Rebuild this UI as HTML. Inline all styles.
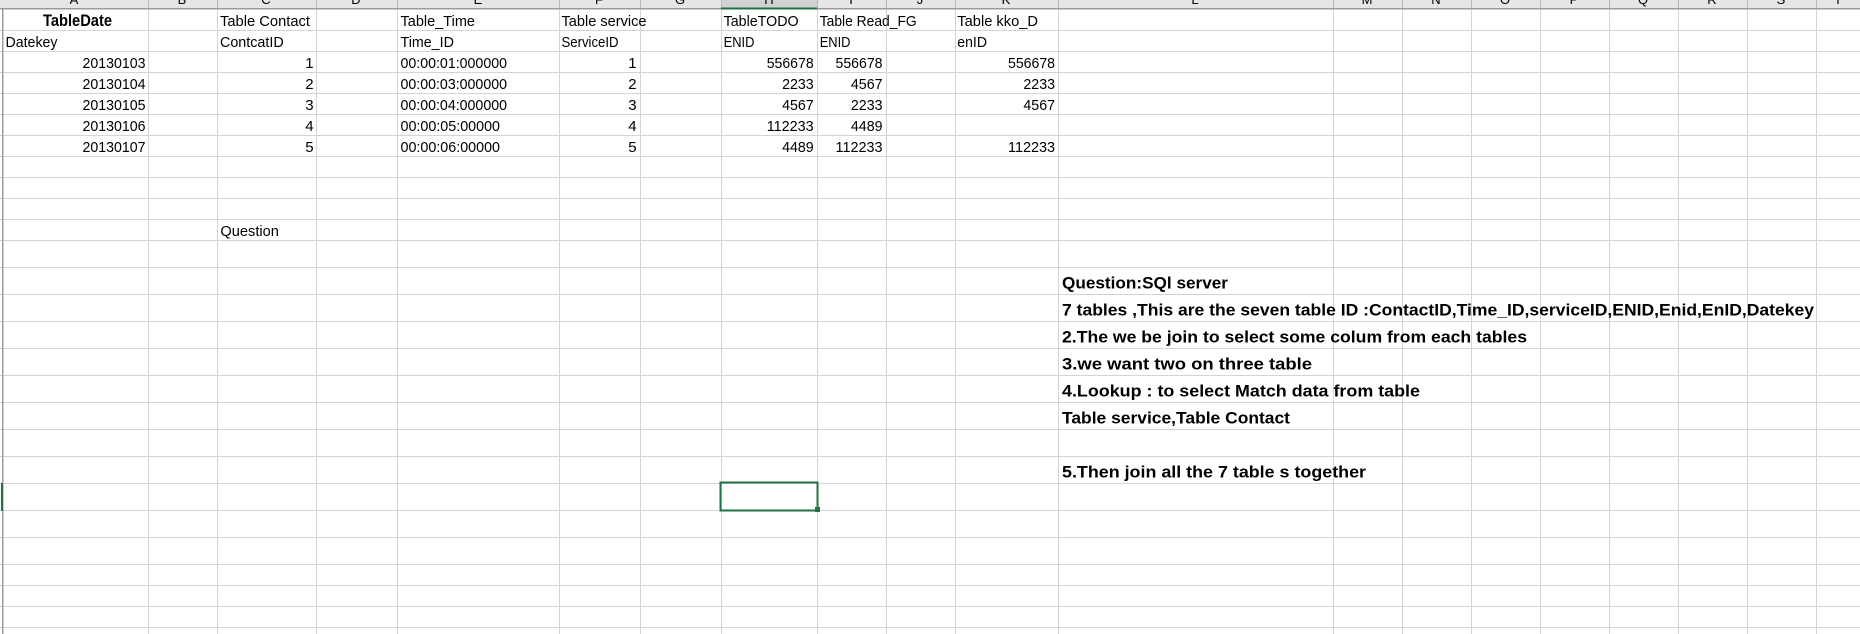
<!DOCTYPE html>
<html><head><meta charset="utf-8"><style>
html,body{margin:0;padding:0;background:#fff;width:1860px;height:634px;overflow:hidden}
svg{display:block}
text{font-family:"Liberation Sans",sans-serif;fill:#000}
.n{font-size:15px}
.b{font-size:16.5px;font-weight:bold}
.h{font-size:13px;fill:#444}
</style></head><body>
<svg width="1860" height="634" viewBox="0 0 1860 634" xmlns="http://www.w3.org/2000/svg" shape-rendering="crispEdges">
<rect x="0" y="0" width="1860" height="9" fill="#e6e6e6"/>
<rect x="721" y="0" width="96" height="9" fill="#d2d2d2"/>
<g class="h" text-anchor="middle">
<text x="74" y="4">A</text><text x="182" y="4">B</text><text x="266" y="4">C</text><text x="356" y="4">D</text>
<text x="478" y="4">E</text><text x="599" y="4">F</text><text x="680" y="4">G</text><text x="769" y="4">H</text>
<text x="851" y="4">I</text><text x="920" y="4">J</text><text x="1006" y="4">K</text><text x="1195" y="4">L</text>
<text x="1367" y="4">M</text><text x="1436" y="4">N</text><text x="1505" y="4">O</text><text x="1574" y="4">P</text>
<text x="1643" y="4">Q</text><text x="1712" y="4">R</text><text x="1781" y="4">S</text><text x="1838" y="4">T</text>
</g>
<g stroke="#b8b8b8" stroke-width="1">
<path d="M148.5 0V9M217.5 0V9M316.5 0V9M397.5 0V9M559.5 0V9M640.5 0V9M721.5 0V9M817.5 0V9M886.5 0V9M955.5 0V9M1058.5 0V9M1333.5 0V9M1402.5 0V9M1471.5 0V9M1540.5 0V9M1609.5 0V9M1678.5 0V9M1747.5 0V9M1816.5 0V9"/>
</g>
<g stroke="#d4d4d4" stroke-width="1">
<path d="M148.5 9V634M217.5 9V634M316.5 9V634M397.5 9V634M559.5 9V634M640.5 9V634M721.5 9V634M817.5 9V634M886.5 9V634M955.5 9V634M1058.5 9V634M1333.5 9V634M1402.5 9V634M1471.5 9V634M1540.5 9V634M1609.5 9V634M1678.5 9V634M1747.5 9V634M1816.5 9V634"/>
<path d="M0 30.5H1860M0 51.5H1860M0 72.5H1860M0 93.5H1860M0 114.5H1860M0 135.5H1860M0 156.5H1860M0 177.5H1860M0 198.5H1860M0 219.5H1860M0 240.5H1860M0 267.5H1860M0 294.5H1860M0 321.5H1860M0 348.5H1860M0 375.5H1860M0 402.5H1860M0 429.5H1860M0 456.5H1860M0 483.5H1860M0 510.5H1860M0 537.5H1860M0 564.5H1860M0 585.5H1860M0 606.5H1860M0 627.5H1860"/>
</g>
<rect x="0" y="8" width="1860" height="1.5" fill="#9b9b9b"/>
<rect x="721" y="7.5" width="96" height="2" fill="#217346"/>
<rect x="2" y="9" width="1.3" height="625" fill="#9b9b9b"/>
<rect x="1" y="483" width="2" height="28" fill="#217346"/>
<rect x="720.5" y="482.5" width="97" height="28" fill="none" stroke="#217346" stroke-width="2"/>
<rect x="815" y="507" width="5" height="5" fill="#217346"/>

<text class="b" x="43" y="26" textLength="69" lengthAdjust="spacingAndGlyphs">TableDate</text>
<g class="n">
<text x="5.5" y="47" textLength="52" lengthAdjust="spacingAndGlyphs">Datekey</text>
<g text-anchor="end">
<text x="145.5" y="68" textLength="63" lengthAdjust="spacingAndGlyphs">20130103</text>
<text x="145.5" y="89" textLength="63" lengthAdjust="spacingAndGlyphs">20130104</text>
<text x="145.5" y="110" textLength="63" lengthAdjust="spacingAndGlyphs">20130105</text>
<text x="145.5" y="131" textLength="63" lengthAdjust="spacingAndGlyphs">20130106</text>
<text x="145.5" y="152" textLength="63" lengthAdjust="spacingAndGlyphs">20130107</text>
<text x="313.6" y="68">1</text><text x="313.6" y="89">2</text><text x="313.6" y="110">3</text><text x="313.6" y="131">4</text><text x="313.6" y="152">5</text>
<text x="636.6" y="68">1</text><text x="636.6" y="89">2</text><text x="636.6" y="110">3</text><text x="636.6" y="131">4</text><text x="636.6" y="152">5</text>
<text x="813.7" y="68" textLength="47" lengthAdjust="spacingAndGlyphs">556678</text>
<text x="813.7" y="89" textLength="31.6" lengthAdjust="spacingAndGlyphs">2233</text>
<text x="813.7" y="110" textLength="31.6" lengthAdjust="spacingAndGlyphs">4567</text>
<text x="813.7" y="131" textLength="47" lengthAdjust="spacingAndGlyphs">112233</text>
<text x="813.7" y="152" textLength="31.6" lengthAdjust="spacingAndGlyphs">4489</text>
<text x="882.5" y="68" textLength="47" lengthAdjust="spacingAndGlyphs">556678</text>
<text x="882.5" y="89" textLength="31.6" lengthAdjust="spacingAndGlyphs">4567</text>
<text x="882.5" y="110" textLength="31.6" lengthAdjust="spacingAndGlyphs">2233</text>
<text x="882.5" y="131" textLength="31.6" lengthAdjust="spacingAndGlyphs">4489</text>
<text x="882.5" y="152" textLength="47" lengthAdjust="spacingAndGlyphs">112233</text>
<text x="1055" y="68" textLength="47" lengthAdjust="spacingAndGlyphs">556678</text>
<text x="1055" y="89" textLength="31.6" lengthAdjust="spacingAndGlyphs">2233</text>
<text x="1055" y="110" textLength="31.6" lengthAdjust="spacingAndGlyphs">4567</text>
<text x="1055" y="152" textLength="47" lengthAdjust="spacingAndGlyphs">112233</text>
</g>
<text x="220" y="26" textLength="90" lengthAdjust="spacingAndGlyphs">Table Contact</text>
<text x="220" y="47" textLength="63.7" lengthAdjust="spacingAndGlyphs">ContcatID</text>
<text x="400.5" y="26" textLength="74.5" lengthAdjust="spacingAndGlyphs">Table_Time</text>
<text x="400.5" y="47" textLength="53.4" lengthAdjust="spacingAndGlyphs">Time_ID</text>
<text x="400.5" y="68" textLength="106.5" lengthAdjust="spacingAndGlyphs">00:00:01:000000</text>
<text x="400.5" y="89" textLength="106.5" lengthAdjust="spacingAndGlyphs">00:00:03:000000</text>
<text x="400.5" y="110" textLength="106.5" lengthAdjust="spacingAndGlyphs">00:00:04:000000</text>
<text x="400.5" y="131" textLength="99.5" lengthAdjust="spacingAndGlyphs">00:00:05:00000</text>
<text x="400.5" y="152" textLength="99.5" lengthAdjust="spacingAndGlyphs">00:00:06:00000</text>
<text x="561.5" y="26" textLength="85" lengthAdjust="spacingAndGlyphs">Table service</text>
<text x="561.5" y="47" textLength="57" lengthAdjust="spacingAndGlyphs">ServiceID</text>
<text x="723.6" y="26" textLength="75" lengthAdjust="spacingAndGlyphs">TableTODO</text>
<text x="723.6" y="47" textLength="30.8" lengthAdjust="spacingAndGlyphs">ENID</text>
<text x="819.7" y="26" textLength="97" lengthAdjust="spacingAndGlyphs">Table Read_FG</text>
<text x="819.7" y="47" textLength="30.8" lengthAdjust="spacingAndGlyphs">ENID</text>
<text x="957.3" y="26" textLength="80.7" lengthAdjust="spacingAndGlyphs">Table kko_D</text>
<text x="957.3" y="47" textLength="29.7" lengthAdjust="spacingAndGlyphs">enID</text>
<text x="220.4" y="236" textLength="58.5" lengthAdjust="spacingAndGlyphs">Question</text>
</g>
<g class="b">
<text x="1062" y="288.5" textLength="166" lengthAdjust="spacingAndGlyphs">Question:SQl server</text>
<text x="1062" y="315.5" textLength="752" lengthAdjust="spacingAndGlyphs">7 tables ,This are the seven table ID :ContactID,Time_ID,serviceID,ENID,Enid,EnID,Datekey</text>
<text x="1062" y="342.5" textLength="465" lengthAdjust="spacingAndGlyphs">2.The we be join to select some colum from each tables</text>
<text x="1062" y="369.5" textLength="250" lengthAdjust="spacingAndGlyphs">3.we want two on three table</text>
<text x="1062" y="396.5" textLength="358" lengthAdjust="spacingAndGlyphs">4.Lookup : to select Match data from table</text>
<text x="1062" y="423.5" textLength="228" lengthAdjust="spacingAndGlyphs">Table service,Table Contact</text>
<text x="1062" y="477.5" textLength="304" lengthAdjust="spacingAndGlyphs">5.Then join all the 7 table s together</text>
</g>
</svg>
</body></html>
